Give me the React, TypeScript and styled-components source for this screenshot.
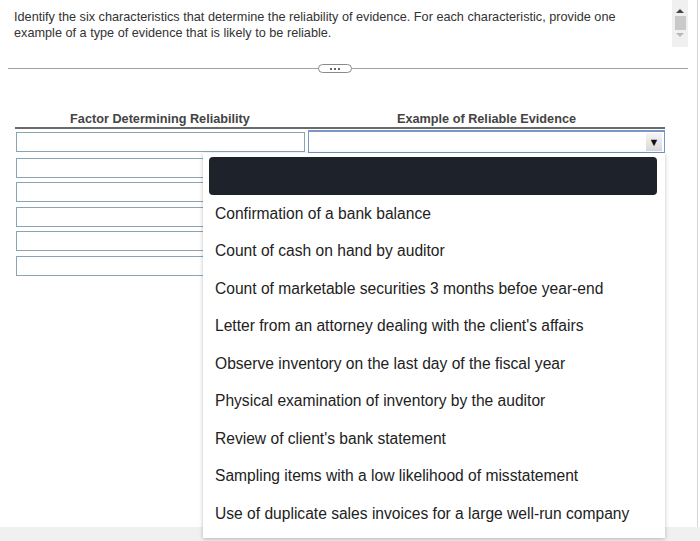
import React from "react";
import styled, {createGlobalStyle} from "styled-components";

const GlobalStyle = createGlobalStyle`
  html, body {
    margin: 0;
    padding: 0;
    background: #fff;
    font-family: Arial, "Liberation Sans", sans-serif;
  }
`

const Page = styled.div`
  width: 700px;
  height: 541px;
  display: flex;
  flex-direction: column;
  overflow: hidden;
`
const Panel = styled.div`
  flex: 1;
  width: 697px;
  border-right: 1px solid #d6d6d6;
  display: flex;
  flex-direction: column;
`
const Top = styled.div`
  display: flex;
  align-items: flex-start;
`
const Prompt = styled.p`
  flex: 1;
  margin: 0;
  padding: 10px 0 0 14px;
  font-size: 12.7px;
  line-height: 15.5px;
  color: #333;
`
const ScrollTrack = styled.div`
  width: 16px;
  height: 47px;
  margin-right: 9px;
  background: #f0f0f0;
  display: flex;
  flex-direction: column;
  align-items: center;
  padding-top: 9px;
  box-sizing: border-box;
  gap: 3px;
`
const Arrow = styled.div<{ $down?: boolean }>`
  width: 0;
  height: 0;
  border-left: 4px solid transparent;
  border-right: 4px solid transparent;
  ${p => p.$down
    ? 'border-top: 4px solid #b8b8b8;'
    : 'border-bottom: 4px solid #444;'}
`
const Thumb = styled.div`
  width: 11px;
  height: 14px;
  background: #c9c9c9;
`
const Separator = styled.div`
  margin: 21px 9px 0 8px;
  height: 1px;
  background: #a0a0a0;
  position: relative;
`
const Pill = styled.div`
  position: absolute;
  left: 310px;
  top: -4px;
  width: 32px;
  height: 7px;
  border: 1px solid #8a8a8a;
  border-radius: 5px;
  background: #fff;
  display: flex;
  align-items: center;
  justify-content: center;
  gap: 2px;
  > span {
    width: 2px;
    height: 2px;
    background: #666;
  }
`
const Table = styled.div`
  margin: 43px 0 0 15px;
  width: 650px;
`
const HeadRow = styled.div`
  display: grid;
  grid-template-columns: 290px 1fr;
  gap: 3px;
  border-bottom: 2px solid #6a6a6a;
`
const HeadCell = styled.div`
  text-align: center;
  font-size: 12.7px;
  font-weight: bold;
  color: #444;
  line-height: 15px;
`
const Rows = styled.div`
  display: flex;
  flex-direction: column;
  gap: 4.6px;
  margin-top: 1px;
`
const Row = styled.div`
  display: grid;
  grid-template-columns: 290px 1fr;
  gap: 3px;
  align-items: center;
`
const TextBox = styled.div`
  height: 18px;
  margin-left: 1px;
  border: 1px solid #8aa4b4;
  background: #fff;
`
const SelectWrap = styled.div`
  position: relative;
`
const SelectBox = styled.div`
  height: 20px;
  border: 1px solid #7996c8;
  border-top-width: 2px;
  background: #fff;
  display: flex;
  justify-content: flex-end;
  align-items: center;
  padding-right: 2px;
`
const ArrowButton = styled.div`
  width: 16px;
  height: 18px;
  background: linear-gradient(#f6f6f6, #d8d8d8);
  display: flex;
  align-items: center;
  justify-content: center;
  font-size: 11px;
  color: #111;
`
const Menu = styled.div`
  position: absolute;
  right: 0;
  top: 23px;
  width: 462px;
  background: #fff;
  box-shadow: 0 1px 4px rgba(0, 0, 0, 0.25);
  padding: 4px 0 5px;
  z-index: 2;
`
const ActiveOption = styled.div`
  height: 38px;
  margin: 0 8px 0 6px;
  border-radius: 4px;
  background: #1e222b;
`
const Option = styled.div`
  height: 37.5px;
  display: flex;
  align-items: center;
  padding-left: 12px;
  font-size: 15.6px;
  color: #222;
`
const Footer = styled.div`
  height: 14px;
  background: #f0f0f0;
`

const options = [
  "Confirmation of a bank balance",
  "Count of cash on hand by auditor",
  "Count of marketable securities 3 months befoe year-end",
  "Letter from an attorney dealing with the client's affairs",
  "Observe inventory on the last day of the fiscal year",
  "Physical examination of inventory by the auditor",
  "Review of client's bank statement",
  "Sampling items with a low likelihood of misstatement",
  "Use of duplicate sales invoices for a large well-run company",
]

const App = () => {
  const rows = [0, 1, 2, 3, 4, 5]
  return (
    <Page>
      <GlobalStyle/>
      <Panel>
        <Top>
          <Prompt>
            Identify the six characteristics that determine the reliability of evidence. For each characteristic, provide one
            <br/>
            example of a type of evidence that is likely to be reliable.
          </Prompt>
          <ScrollTrack>
            <Arrow/>
            <Thumb/>
            <Arrow $down/>
          </ScrollTrack>
        </Top>
        <Separator>
          <Pill><span/><span/><span/></Pill>
        </Separator>
        <Table>
          <HeadRow>
            <HeadCell>Factor Determining Reliability</HeadCell>
            <HeadCell>Example of Reliable Evidence</HeadCell>
          </HeadRow>
          <Rows>
            {rows.map(i =>
              <Row key={i}>
                <TextBox/>
                {i === 0 &&
                  <SelectWrap>
                    <SelectBox>
                      <ArrowButton>▼</ArrowButton>
                    </SelectBox>
                    <Menu>
                      <ActiveOption/>
                      {options.map(o => <Option key={o}>{o}</Option>)}
                    </Menu>
                  </SelectWrap>
                }
              </Row>
            )}
          </Rows>
        </Table>
      </Panel>
      <Footer/>
    </Page>
  );
}

export default App;
